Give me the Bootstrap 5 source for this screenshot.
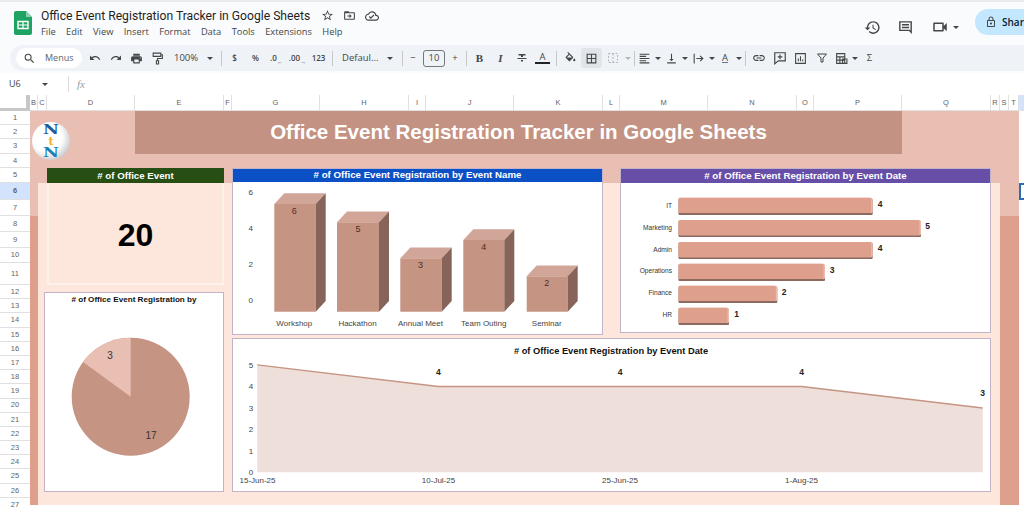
<!DOCTYPE html>
<html lang="en">
<head>
  <meta charset="UTF-8">
  <title>Office Event Registration Tracker in Google Sheets</title>
  <link href="https://cdn.jsdelivr.net/npm/bootstrap@5.3.0/dist/css/bootstrap.min.css" rel="stylesheet">
  <style>
    html, body { height: 507px; overflow: hidden; }
    body { background: #f9fbfd; font-family: "Open Sans", "Liberation Sans", sans-serif; color: #1f1f1f; border-top: 2px solid #e9eaeb; }
    svg { display: block; flex: none; }
    .ico { fill: #444746; }
    .ico-line { fill: none; stroke: #444746; stroke-width: 2; }

    /* title bar */
    .top-bar { height: 43px; padding-left: 14px; }
    .sheets-logo { margin-top: 9px; }
    .doc-name { font-family: Roboto, sans-serif; font-size: 12.15px; line-height: 16px; margin: 6px 0 0; white-space: nowrap; }
    .menu-row { font-size: 9.3px; line-height: 14px; margin-top: 1px; color: #444746; gap: 10.4px; white-space: nowrap; }
    .doc-text { margin-left: 9px; }
    .doc-icons { gap: 9px; margin: 7px 0 0 11px; }
    .right-tools { margin-left: auto; margin-top: 7px; }
    .video-tool { margin-left: 1.5px; }
    .share-pill { width: 49px; height: 26px; background: #c2e7ff; border-radius: 13px 0 0 13px; margin: 0 0 0 16px; padding-left: 10px; font-size: 10px; font-weight: 600; color: #001d35; gap: 5px; overflow: hidden; }

    /* toolbar */
    .tool-bar { height: 26px; background: #eff3f8; margin-left: 10px; border-radius: 13px 0 0 13px; padding-left: 6px; font-size: 9.5px; color: #444746; white-space: nowrap; }
    .menu-search { width: 66px; height: 20px; background: #fff; border-radius: 10px; padding-left: 7px; gap: 9px; margin-right: 2px; color: #5f6368; font-size: 9px; }
    .tb { width: 21px; height: 20px; display: flex; align-items: center; justify-content: center; flex: none; }
    .tb-on { background: #e1e5ea; border-radius: 3px; }
    .tb-wide { width: 48px; gap: 9px; justify-content: flex-start; padding-left: 6px; }
    .tb-font { width: 62px; gap: 9px; justify-content: flex-start; padding-left: 6px; }
    .tb-step { width: 16px; }
    .tb-size { width: 22px; height: 17px; border: 1px solid #747775; border-radius: 3px; margin: 0 2px; }
    .tb-pair { width: 18px; }
    .tb-caret { width: 9px; }
    .tb-sep { width: 1px; height: 15px; background: #c7c7c7; flex: none; }
    .sep-a { margin: 0 2px 0 5px; }
    .sep-b { margin: 0 3px; }
    .sep-c { margin: 0 2px 0 4px; }
    .sep-d { margin: 0 2px 0 3px; }
    .sep-e { margin: 0 0 0 2px; }
    .sep-f { margin: 0 2px; }
    .caret-down { width: 0; height: 0; border: 3px solid transparent; border-top: 3px solid #444746; border-bottom: 0; }
    .bold-mark { font-family: "Liberation Serif", serif; font-weight: 700; font-size: 11px; }
    .num-mark { font-size: 8px; font-weight: 600; }
    .num-mark sub { font-size: 6px; font-weight: 400; bottom: -.5em; }
    .fade-mark { opacity: .35; }

    /* formula bar */
    .formula-row { height: 22px; margin-top: 2px; background: #fff; font-size: 9px; color: #444746; padding-left: 9px; }
    .cell-name { width: 47px; }
    .fx-mark { font-family: "Liberation Serif", serif; font-style: italic; font-size: 11px; color: #9aa0a6; margin-left: 12px; border-left: 1px solid #dadce0; padding-left: 8px; }

    /* sheet grid */
    .sheet { display: grid; height: 412px; overflow: hidden; background: #fff;
      grid-template-columns: 30px 8px 9px 88px 89px 8px 88px 89px 17px 88px 89px 17px 88px 89px 17px 88px 89px 9px 9px 10px 5px;
      grid-template-rows: 16px 14px 14px 15px 14px 15px 17px 16px 16px 16px 15px 22px repeat(16, 14.2px);
      font-family: "Liberation Sans", sans-serif; }
    .col-head { grid-row: 1; background: #fff; border-right: 1px solid #e0e0e0; border-bottom: 1px solid #e0e0e0; font-size: 7.5px; color: #5f6368; display: flex; align-items: center; justify-content: center; }
    .col-corner { border-right: 4px solid #c7c7c7; border-bottom: 3px solid #c7c7c7; }
    .col-pick { background: #d3e3fd; }
    .row-head { grid-column: 1; background: #fff; border-bottom: 1px solid #e0e0e0; font-size: 7.5px; color: #5f6368; display: flex; align-items: center; justify-content: center; }
    .row-pick { background: #d3e3fd; font-weight: 700; }
    .band-top { grid-column: 2 / 21; grid-row: 2 / 7; background: #e8bfb2; }
    .band-left { grid-column: 2 / 3; grid-row: 7 / 9; background: #e8bfb2; }
    .band-left-dark { grid-column: 2 / 3; grid-row: 9 / 29; background: #dea08d; margin-bottom: 7px; }
    .band-right { grid-column: 19 / 21; grid-row: 7 / 9; background: #e8bfb2; }
    .band-right-dark { grid-column: 19 / 21; grid-row: 9 / 29; background: #dea08d; margin-bottom: 7px; }
    .band-panel { grid-column: 3 / 19; grid-row: 7 / 29; background: #fde6db; margin-bottom: 7px; }
    .pick-cell { grid-column: 21; grid-row: 7; border: 2px solid #2b6cb8; border-right: 0; }
    .title-band { grid-column: 5 / 17; grid-row: 2 / 5; background: #c49282; color: #fff; font-size: 20.5px; font-weight: 700; }
    .logo-wrap { grid-column: 2 / 5; grid-row: 2 / 6; margin: 11px 0 0 2px; }
    .logo-n { font-family: "DejaVu Serif", serif; font-weight: 700; font-size: 12px; }
    .logo-t { font-family: "DejaVu Serif", serif; font-weight: 700; font-size: 11px; }

    /* cards on the sheet */
    .sheet-card { border-radius: 0; border: 1px solid #c3b3c9; background: #fff; align-self: start; overflow: hidden; }
    .sheet-head { height: 15px; line-height: 15px; margin-top: -1px; padding: 0; border: 0; border-radius: 0 !important; color: #fff; font-size: 9.7px; font-weight: 700; text-align: center; }
    .head-green { background: #274e13; margin-top: 0; }
    .head-blue { background: #0b50c4; height: 14px; line-height: 14px; }
    .head-purple { background: #674ea7; }
    .count-card { grid-column: 4 / 6; grid-row: 6 / 13; height: 117px; border: 0; background: #fde6db; }
    .count-body { border: 2px solid #fef1ea; border-top: 0; margin: 0; padding-top: 4px; font-size: 32px; font-weight: 700; color: #000; }
    .pie-card { grid-column: 4 / 6; grid-row: 13 / 29; margin: 7px 0 0 -3px; height: 200px; }
    .bar-card { grid-column: 7 / 12; grid-row: 6 / 16; height: 166.5px; }
    .hbar-card { grid-column: 13 / 18; grid-row: 6 / 16; height: 164.5px; }
    .area-card { grid-column: 7 / 18; grid-row: 16 / 29; margin-top: 10px; height: 154px; }
    .sheet-card text { font-family: "Liberation Sans", sans-serif; }
    .t-axis { font-size: 8px; fill: #444; }
    .t-cat { font-size: 6.6px; fill: #333; }
    .t-val { font-size: 8.5px; font-weight: 700; fill: #222; }
    .t-bar { font-size: 9px; fill: #4b2f27; }
    .t-pie { font-size: 10px; fill: #333; }
    .t-title { font-size: 9.3px; font-weight: 700; fill: #111; }
    .t-title-sm { font-size: 8.1px; font-weight: 700; fill: #111; }
  </style>
</head>
<body class="d-flex flex-column">

  <div class="top-bar d-flex flex-none">
    <svg class="sheets-logo" width="18" height="24" viewBox="0 0 18 24"><path d="M2 0h10l6 6v16a2 2 0 0 1-2 2H2a2 2 0 0 1-2-2V2a2 2 0 0 1 2-2z" fill="#1ea362"/><path d="M12 0l6 6h-6z" fill="#8ed1b1"/><path d="M4 10.5h10v7H4z" fill="none" stroke="#fff" stroke-width="1.4"/><path d="M4 14h10M9 10.5v7" stroke="#fff" stroke-width="1.2"/></svg>
    <div class="doc-text">
      <div class="d-flex align-items-start">
        <p class="doc-name">Office Event Registration Tracker in Google Sheets</p>
        <div class="doc-icons d-flex align-items-start">
          <svg class="ico" width="13" height="13" viewBox="0 0 24 24"><path d="M22 9.24l-7.19-.62L12 2 9.19 8.63 2 9.24l5.46 4.73L5.82 21 12 17.27 18.18 21l-1.63-7.03L22 9.24zM12 15.4l-3.76 2.27 1-4.28-3.32-2.88 4.38-.38L12 6.1l1.71 4.04 4.38.38-3.32 2.88 1 4.28L12 15.4z"/></svg>
          <svg class="ico" width="13" height="13" viewBox="0 0 24 24"><path d="M20 6h-8l-2-2H4c-1.1 0-2 .9-2 2v12c0 1.1.9 2 2 2h16c1.1 0 2-.9 2-2V8c0-1.1-.9-2-2-2zm0 12H4V8h16v10zm-8-1 4-4-4-4v3H8v2h4z"/></svg>
          <svg class="ico" width="14" height="14" viewBox="0 0 24 24"><path d="M19.35 10.04C18.67 6.59 15.64 4 12 4 9.11 4 6.6 5.64 5.35 8.04 2.34 8.36 0 10.91 0 14c0 3.31 2.69 6 6 6h13c2.76 0 5-2.24 5-5 0-2.64-2.05-4.78-4.65-4.96zM19 18H6c-2.21 0-4-1.79-4-4 0-2.05 1.53-3.76 3.56-3.97l1.07-.11.5-.95C8.08 7.14 9.94 6 12 6c2.62 0 4.88 1.86 5.39 4.43l.3 1.5 1.53.11c1.56.1 2.78 1.41 2.78 2.96 0 1.65-1.35 3-3 3zm-9-3.82l-2.09-2.09L6.5 13.5 10 17l6.01-6.01-1.41-1.41z"/></svg>
        </div>
      </div>
      <div class="menu-row d-flex"><span>File</span><span>Edit</span><span>View</span><span>Insert</span><span>Format</span><span>Data</span><span>Tools</span><span>Extensions</span><span>Help</span></div>
    </div>
    <div class="right-tools d-flex">
      <div class="d-flex align-items-center gap-3">
        <svg class="ico" width="17" height="17" viewBox="0 0 24 24"><path d="M13 3c-4.97 0-9 4.03-9 9H1l3.89 3.89.07.14L9 12H6c0-3.87 3.13-7 7-7s7 3.13 7 7-3.13 7-7 7c-1.93 0-3.68-.79-4.94-2.06l-1.42 1.42C8.27 19.99 10.51 21 13 21c4.97 0 9-4.03 9-9s-4.03-9-9-9zm-1 5v5l4.28 2.54.72-1.21-3.5-2.08V8H12z"/></svg>
        <svg class="ico" width="17" height="17" viewBox="0 0 24 24"><path d="M21 3H3v14h14l4 4V3zm-2 13.17L17.83 15H5V5h14v11.17zM7 7h10v2H7zm0 4h10v2H7z"/></svg>
        <div class="video-tool d-flex align-items-center gap-1">
          <svg class="ico" width="18" height="18" viewBox="0 0 24 24"><path d="M15 8v8H5V8h10m1-2H4c-.55 0-1 .45-1 1v10c0 .55.45 1 1 1h12c.55 0 1-.45 1-1v-3.5l4 4v-11l-4 4V7c0-.55-.45-1-1-1z"/></svg>
          <span class="caret-down"></span>
        </div>
      </div>
      <div class="share-pill d-flex align-items-center">
        <svg class="ico" width="12" height="12" viewBox="0 0 24 24"><path d="M18 8h-1V6c0-2.76-2.24-5-5-5S7 3.24 7 6v2H6c-1.1 0-2 .9-2 2v10c0 1.1.9 2 2 2h12c1.1 0 2-.9 2-2V10c0-1.1-.9-2-2-2zM9 6c0-1.66 1.34-3 3-3s3 1.34 3 3v2H9V6zm9 14H6V10h12v10zm-6-3c1.1 0 2-.9 2-2s-.9-2-2-2-2 .9-2 2 .9 2 2 2z"/></svg>
        <span>Share</span>
      </div>
    </div>
  </div>

  <div class="tool-bar d-flex align-items-center flex-none">
    <div class="menu-search d-flex align-items-center">
      <svg class="ico" width="13" height="13" viewBox="0 0 24 24"><path d="M15.5 14h-.79l-.28-.27A6.47 6.47 0 0 0 16 9.5 6.5 6.5 0 1 0 9.5 16c1.61 0 3.09-.59 4.23-1.57l.27.28v.79l5 4.99L20.49 19l-4.99-5zm-6 0C7.01 14 5 11.99 5 9.5S7.01 5 9.5 5 14 7.01 14 9.5 11.99 14 9.5 14z"/></svg>
      <span>Menus</span>
    </div>
    <div class="tb"><svg class="ico" width="12" height="12" viewBox="0 0 24 24"><path d="M12.5 8c-2.65 0-5.05.99-6.9 2.6L2 7v9h9l-3.62-3.62c1.39-1.16 3.16-1.88 5.12-1.88 3.54 0 6.55 2.31 7.6 5.5l2.37-.78C21.08 11.03 17.15 8 12.5 8z"/></svg></div>
    <div class="tb"><svg class="ico" width="12" height="12" viewBox="0 0 24 24"><path d="M18.4 10.6C16.55 8.99 14.15 8 11.5 8c-4.65 0-8.58 3.03-9.96 7.22L3.9 16c1.05-3.19 4.05-5.5 7.6-5.5 1.95 0 3.73.72 5.12 1.88L13 16h9V7l-3.6 3.6z"/></svg></div>
    <div class="tb"><svg class="ico" width="13" height="13" viewBox="0 0 24 24"><path d="M19 8H5c-1.66 0-3 1.34-3 3v6h4v4h12v-4h4v-6c0-1.66-1.34-3-3-3zm-3 11H8v-5h8v5zm3-7c-.55 0-1-.45-1-1s.45-1 1-1 1 .45 1 1-.45 1-1 1zm-1-9H6v4h12V3z"/></svg></div>
    <div class="tb"><svg class="ico-line" width="13" height="15" viewBox="0 0 24 24"><path d="M4 2h14v6H4zM18 5h3v7H12v4M10 16h4v6h-4z"/></svg></div>
    <div class="tb tb-wide"><span>100%</span><span class="caret-down"></span></div>
    <span class="tb-sep sep-a"></span>
    <div class="tb num-mark">$</div>
    <div class="tb num-mark">%</div>
    <div class="tb num-mark"><span>.0<sub>&larr;</sub></span></div>
    <div class="tb num-mark"><span>.00<sub>&rarr;</sub></span></div>
    <div class="tb num-mark">123</div>
    <span class="tb-sep sep-b"></span>
    <div class="tb tb-font"><span>Defaul...</span><span class="caret-down"></span></div>
    <span class="tb-sep sep-c"></span>
    <div class="tb tb-step">&minus;</div>
    <div class="tb tb-size">10</div>
    <div class="tb tb-step">+</div>
    <span class="tb-sep sep-d"></span>
    <div class="tb bold-mark">B</div>
    <div class="tb bold-mark fst-italic">I</div>
    <div class="tb"><svg class="ico" width="12" height="12" viewBox="0 0 24 24"><path d="M10 19h4v-3h-4v3zM5 4v3h5v3h4V7h5V4H5zM3 14h18v-2H3v2z"/></svg></div>
    <div class="tb"><span class="border-bottom border-2 border-dark lh-1 px-1">A</span></div>
    <span class="tb-sep sep-b"></span>
    <div class="tb"><svg class="ico" width="13" height="13" viewBox="0 0 24 24"><path d="M16.56 8.94L7.62 0 6.21 1.41l2.38 2.38-5.15 5.15c-.59.59-.59 1.54 0 2.12l5.5 5.5c.29.29.68.44 1.06.44s.77-.15 1.06-.44l5.5-5.5c.59-.58.59-1.53 0-2.12zM5.21 10L10 5.21 14.79 10H5.21zM19 11.5s-2 2.17-2 3.5c0 1.1.9 2 2 2s2-.9 2-2c0-1.33-2-3.5-2-3.5z"/></svg></div>
    <div class="tb tb-on"><svg class="ico" width="13" height="13" viewBox="0 0 24 24"><path d="M3 3v18h18V3H3zm8 16H5v-6h6v6zm0-8H5V5h6v6zm8 8h-6v-6h6v6zm0-8h-6V5h6v6z"/></svg></div>
    <div class="tb fade-mark"><svg class="ico-line" width="12" height="12" viewBox="0 0 24 24" stroke-dasharray="4 3"><path d="M3 3h18v18H3zM12 3v18"/></svg></div>
    <div class="tb tb-caret fade-mark"><span class="caret-down"></span></div>
    <span class="tb-sep sep-e"></span>
    <div class="tb tb-pair"><svg class="ico" width="13" height="13" viewBox="0 0 24 24"><path d="M15 15H3v2h12v-2zm0-8H3v2h12V7zM3 13h18v-2H3v2zm0 8h18v-2H3v2zM3 3v2h18V3H3z"/></svg></div>
    <div class="tb tb-caret"><span class="caret-down"></span></div>
    <div class="tb tb-pair"><svg class="ico" width="13" height="13" viewBox="0 0 24 24"><path d="M16 13h-3V3h-2v10H8l4 4 4-4zM4 19v2h16v-2H4z"/></svg></div>
    <div class="tb tb-caret"><span class="caret-down"></span></div>
    <div class="tb tb-pair"><svg class="ico-line" width="13" height="13" viewBox="0 0 24 24"><path d="M4 3v18M8 12h12M15 7l5 5-5 5"/></svg></div>
    <div class="tb tb-caret"><span class="caret-down"></span></div>
    <div class="tb tb-pair"><span class="border-bottom border-secondary lh-1">A</span></div>
    <div class="tb tb-caret"><span class="caret-down"></span></div>
    <span class="tb-sep sep-f"></span>
    <div class="tb"><svg class="ico" width="14" height="14" viewBox="0 0 24 24"><path d="M3.9 12c0-1.71 1.39-3.1 3.1-3.1h4V7H7c-2.76 0-5 2.24-5 5s2.24 5 5 5h4v-1.9H7c-1.71 0-3.1-1.39-3.1-3.1zM8 13h8v-2H8v2zm9-6h-4v1.9h4c1.71 0 3.1 1.39 3.1 3.1s-1.39 3.1-3.1 3.1h-4V17h4c2.76 0 5-2.24 5-5s-2.24-5-5-5z"/></svg></div>
    <div class="tb"><svg class="ico-line" width="14" height="14" viewBox="0 0 24 24"><path d="M3 3h18v14H9l-6 5zM12 6v8M8 10h8"/></svg></div>
    <div class="tb"><svg class="ico-line" width="13" height="13" viewBox="0 0 24 24"><path d="M3 3h18v18H3zM8 17v-5M12 17V8M16 17v-3"/></svg></div>
    <div class="tb"><svg class="ico-line" width="12" height="12" viewBox="0 0 24 24"><path d="M3 4h18l-7 8v8h-4v-8z"/></svg></div>
    <div class="tb tb-pair"><svg class="ico-line" width="13" height="13" viewBox="0 0 24 24"><path d="M3 3h15v18H3zM3 9h15M3 15h15M9 9v12M14 13h8v8h-8z"/></svg></div>
    <div class="tb tb-caret"><span class="caret-down"></span></div>
    <div class="tb">&Sigma;</div>
  </div>

  <div class="formula-row d-flex align-items-center flex-none">
    <span class="cell-name d-flex justify-content-between align-items-center pe-2"><span>U6</span><span class="caret-down"></span></span>
    <span class="fx-mark">fx</span>
  </div>

  <div class="sheet flex-none">
    <div class="col-head col-corner"></div>
    <div class="col-head">B</div><div class="col-head">C</div><div class="col-head">D</div><div class="col-head">E</div><div class="col-head">F</div><div class="col-head">G</div><div class="col-head">H</div><div class="col-head">I</div><div class="col-head">J</div><div class="col-head">K</div><div class="col-head">L</div><div class="col-head">M</div><div class="col-head">N</div><div class="col-head">O</div><div class="col-head">P</div><div class="col-head">Q</div><div class="col-head">R</div><div class="col-head">S</div><div class="col-head">T</div><div class="col-head col-pick"></div>

    <div class="row-head">1</div><div class="row-head">2</div><div class="row-head">3</div><div class="row-head">4</div><div class="row-head">5</div><div class="row-head row-pick">6</div><div class="row-head">7</div><div class="row-head">8</div><div class="row-head">9</div><div class="row-head">10</div><div class="row-head">11</div><div class="row-head">12</div><div class="row-head">13</div><div class="row-head">14</div><div class="row-head">15</div><div class="row-head">16</div><div class="row-head">17</div><div class="row-head">18</div><div class="row-head">19</div><div class="row-head">20</div><div class="row-head">21</div><div class="row-head">22</div><div class="row-head">23</div><div class="row-head">24</div><div class="row-head">25</div><div class="row-head">26</div><div class="row-head">27</div>

    <div class="band-top"></div>
    <div class="band-left"></div>
    <div class="band-left-dark"></div>
    <div class="band-right"></div>
    <div class="band-right-dark"></div>
    <div class="band-panel"></div>
    <div class="pick-cell"></div>

    <div class="title-band d-flex align-items-center justify-content-center">Office Event Registration Tracker in Google Sheets</div>

    <div class="logo-wrap">
      <svg width="38" height="38" viewBox="0 0 38 38">
        <defs><radialGradient id="logoShade" cx="40%" cy="40%" r="65%"><stop offset="60%" stop-color="#fff"/><stop offset="100%" stop-color="#c9c9cd"/></radialGradient></defs>
        <circle cx="19" cy="19" r="19" fill="url(#logoShade)"/>
        <text class="logo-n" transform="translate(19 11.5) scale(1.45 1)" text-anchor="middle" fill="#1b5a9c">N</text>
        <text class="logo-t" x="19" y="23" text-anchor="middle" fill="#efb02e">t</text>
        <text class="logo-n" transform="translate(19 35) scale(1.45 1)" text-anchor="middle" fill="#1a80b8">N</text>
      </svg>
    </div>

    <div class="card sheet-card count-card">
      <div class="card-header sheet-head head-green">&#35; of Office Event</div>
      <div class="count-body flex-grow-1 d-flex align-items-center justify-content-center">20</div>
    </div>

    <div class="card sheet-card pie-card">
      <svg width="178" height="198" viewBox="45 293 178 198">
        <text class="t-title-sm" x="134" y="302" text-anchor="middle">&#35; of Office Event Registration by</text>
        <circle cx="130.7" cy="396.7" r="59" fill="#c69483"/>
        <path d="M130.7 396.7V337.7A59 59 0 0 0 83 362z" fill="#e8bfb2"/>
        <text class="t-pie" x="110" y="359" text-anchor="middle">3</text>
        <text class="t-pie" x="151" y="439" text-anchor="middle">17</text>
      </svg>
    </div>

    <div class="card sheet-card bar-card">
      <div class="card-header sheet-head head-blue">&#35; of Office Event Registration by Event Name</div>
      <svg width="369" height="151" viewBox="233 182 369 151">
        <g text-anchor="middle">
          <text class="t-axis" x="250.7" y="195.2">6</text>
          <text class="t-axis" x="250.7" y="231">4</text>
          <text class="t-axis" x="250.7" y="267.3">2</text>
          <text class="t-axis" x="250.7" y="303">0</text>
        </g>
        <!-- front, top and side of each column -->
        <path d="M274.3 204h41.4v107.7h-41.4z" fill="#c69483"/><path d="M274.3 204l10-10.7h41.4l-10 10.7z" fill="#d1a698"/><path d="M315.7 204l10-10.7v107.7l-10 10.7z" fill="#86645a"/>
        <path d="M337 222.3h42v89.4h-42z" fill="#c69483"/><path d="M337 222.3l10-10.7h42l-10 10.7z" fill="#d1a698"/><path d="M379 222.3l10-10.7v89.4l-10 10.7z" fill="#86645a"/>
        <path d="M400.3 258.3h41.4v53.4h-41.4z" fill="#c69483"/><path d="M400.3 258.3l10-10.7h41.4l-10 10.7z" fill="#d1a698"/><path d="M441.7 258.3l10-10.7v53.4l-10 10.7z" fill="#86645a"/>
        <path d="M463.3 240h41v71.7h-41z" fill="#c69483"/><path d="M463.3 240l10-10.7h41l-10 10.7z" fill="#d1a698"/><path d="M504.3 240l10-10.7v71.7l-10 10.7z" fill="#86645a"/>
        <path d="M526.7 276.3h41v35.4h-41z" fill="#c69483"/><path d="M526.7 276.3l10-10.7h41l-10 10.7z" fill="#d1a698"/><path d="M567.7 276.3l10-10.7v35.4l-10 10.7z" fill="#86645a"/>
        <g text-anchor="middle">
          <text class="t-bar" x="294.3" y="214">6</text>
          <text class="t-bar" x="358" y="231.5">5</text>
          <text class="t-bar" x="420.5" y="268">3</text>
          <text class="t-bar" x="483.8" y="249.8">4</text>
          <text class="t-bar" x="546.7" y="285.5">2</text>
          <text class="t-axis" x="294.3" y="325.6">Workshop</text>
          <text class="t-axis" x="357.5" y="325.6">Hackathon</text>
          <text class="t-axis" x="420.5" y="325.6">Annual Meet</text>
          <text class="t-axis" x="483.8" y="325.6">Team Outing</text>
          <text class="t-axis" x="546.7" y="325.6">Seminar</text>
        </g>
      </svg>
    </div>

    <div class="card sheet-card hbar-card">
      <div class="card-header sheet-head head-purple">&#35; of Office Event Registration by Event Date</div>
      <svg width="369" height="148" viewBox="621 183 369 148">
        <g fill="#8c6a60">
          <rect x="678.5" y="199" width="194.2" height="16" rx="1"/><rect x="678.5" y="221" width="242.5" height="16" rx="1"/><rect x="678.5" y="243" width="194.2" height="16" rx="1"/><rect x="678.5" y="265" width="146.5" height="16" rx="1"/><rect x="678.5" y="287" width="98.8" height="16" rx="1"/><rect x="678.5" y="309" width="50.5" height="16" rx="1"/>
        </g>
        <g fill="#e9bcae">
          <rect x="678.5" y="197.7" width="194.2" height="15.3" rx="1.5"/><rect x="678.5" y="220" width="242.5" height="15.3" rx="1.5"/><rect x="678.5" y="242" width="194.2" height="15.3" rx="1.5"/><rect x="678.5" y="263.7" width="146.5" height="15.3" rx="1.5"/><rect x="678.5" y="285.7" width="98.8" height="15.3" rx="1.5"/><rect x="678.5" y="307.7" width="50.5" height="15.3" rx="1.5"/>
        </g>
        <g fill="#dea08d">
          <rect x="678.5" y="197.7" width="192.7" height="15.3" rx="1.5"/><rect x="678.5" y="220" width="241" height="15.3" rx="1.5"/><rect x="678.5" y="242" width="192.7" height="15.3" rx="1.5"/><rect x="678.5" y="263.7" width="145" height="15.3" rx="1.5"/><rect x="678.5" y="285.7" width="97.3" height="15.3" rx="1.5"/><rect x="678.5" y="307.7" width="49" height="15.3" rx="1.5"/>
        </g>
        <g text-anchor="end">
          <text class="t-cat" x="672" y="207.5">IT</text>
          <text class="t-cat" x="672" y="229.5">Marketing</text>
          <text class="t-cat" x="672" y="251.5">Admin</text>
          <text class="t-cat" x="672" y="272.8">Operations</text>
          <text class="t-cat" x="672" y="294.5">Finance</text>
          <text class="t-cat" x="672" y="316.5">HR</text>
        </g>
        <g text-anchor="middle">
          <text class="t-val" x="880" y="207">4</text>
          <text class="t-val" x="927.7" y="229">5</text>
          <text class="t-val" x="880" y="250.8">4</text>
          <text class="t-val" x="832" y="272.8">3</text>
          <text class="t-val" x="784" y="295">2</text>
          <text class="t-val" x="736.5" y="316.8">1</text>
        </g>
      </svg>
    </div>

    <div class="card sheet-card area-card">
      <svg width="757" height="152" viewBox="233 338.5 757 152">
        <text class="t-title" x="611" y="353.5" text-anchor="middle">&#35; of Office Event Registration by Event Date</text>
        <path d="M257.3 364.3L438.3 386H801.7L982.7 407.5V471.7H257.3z" fill="#eedfda"/>
        <path d="M257.3 364.3L438.3 386H801.7L982.7 407.5" fill="none" stroke="#c69483" stroke-width="1.3"/>
        <g text-anchor="middle">
          <text class="t-axis" x="251" y="367">5</text>
          <text class="t-axis" x="251" y="388.5">4</text>
          <text class="t-axis" x="251" y="410">3</text>
          <text class="t-axis" x="251" y="431.5">2</text>
          <text class="t-axis" x="251" y="453">1</text>
          <text class="t-axis" x="251" y="474">0</text>
          <text class="t-val" x="438.3" y="374">4</text>
          <text class="t-val" x="620" y="374">4</text>
          <text class="t-val" x="801.7" y="374">4</text>
          <text class="t-val" x="982.7" y="395.5">3</text>
          <text class="t-axis" x="257.5" y="482">15-Jun-25</text>
          <text class="t-axis" x="438.5" y="482">10-Jul-25</text>
          <text class="t-axis" x="620" y="482">25-Jun-25</text>
          <text class="t-axis" x="801.5" y="482">1-Aug-25</text>
        </g>
      </svg>
    </div>
  </div>

</body>
</html>
